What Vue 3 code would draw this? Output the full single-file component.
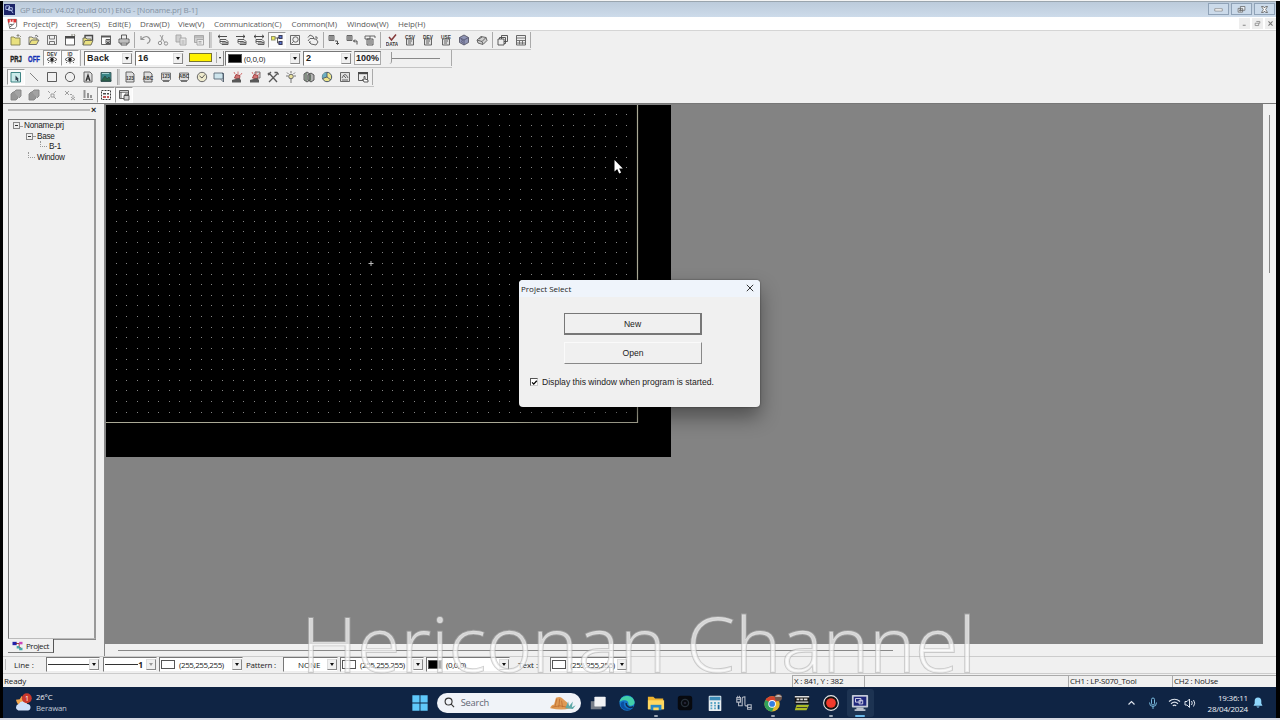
<template>
  <div class="desktop">
    <div class="app-window">
      <header class="title-bar">
        <svg class="app-icon" viewBox="0 0 12 12" v-html="icons.app"></svg>
        <span class="title-text">GP Editor V4.02 (build 001) ENG - [Noname.prj B-1]</span>
        <div class="window-buttons">
          <button v-for="b in ['min', 'restore', 'close']" :key="b" class="window-btn">
            <svg viewBox="0 0 12 12" v-html="icons['win_' + b]"></svg>
          </button>
        </div>
      </header>

      <nav class="menu-bar">
        <svg class="menu-icon" viewBox="0 0 12 12" v-html="icons.doc"></svg>
        <span v-for="m in menus" :key="m.label" class="menu-item" :style="{ width: m.width + 'px' }">{{ m.label }}</span>
        <div class="mdi-buttons">
          <span v-for="b in ['min', 'restore', 'close']" :key="b" class="mdi-btn">
            <svg viewBox="0 0 12 12" v-html="icons['mdi_' + b]"></svg>
          </span>
        </div>
      </nav>

      <div class="toolbars">
        <div class="toolbar">
          <template v-for="(group, i) in mainTools" :key="i">
            <i v-if="i" class="sep" :class="{ wide: i === 2, loose: i === 4 }"></i>
            <span v-for="t in group" :key="t" class="tool" :class="{ pressed: t === 'tree' }">
              <svg viewBox="0 0 12 12" v-html="icons[t]"></svg>
            </span>
          </template>
          <i class="sep end"></i>
        </div>

        <div class="toolbar">
          <span class="tool word">PRJ</span>
          <span class="tool word blue">OFF</span>
          <span class="tool pressed"><svg viewBox="0 0 12 12" v-html="icons.devEye"></svg></span>
          <span class="tool pressed"><svg viewBox="0 0 12 12" v-html="icons.idEye"></svg></span>
          <i class="sep gap"></i>
          <div class="combo bold back">Back<b class="arrow"></b></div>
          <div class="combo bold size">16<b class="arrow"></b></div>
          <div class="color-btn"><span class="swatch yellow"></span><b class="arrow"></b></div>
          <div class="combo color"><span class="swatch black"></span>(0,0,0)<b class="arrow"></b></div>
          <div class="combo bold width">2<b class="arrow"></b></div>
          <div class="zoom-box">100%</div>
          <div class="slider"><span class="thumb"></span><span class="track"></span></div>
          <i class="sep end"></i>
        </div>

        <div class="toolbar">
          <span v-for="t in drawTools" :key="t" class="tool" :class="{ pressed: t === 'select' }">
            <svg viewBox="0 0 12 12" v-html="icons[t]"></svg>
          </span>
          <i class="sep wide draw"></i>
          <span v-for="t in partTools" :key="t" class="tool part">
            <svg viewBox="0 0 12 12" v-html="icons[t]"></svg>
          </span>
          <i class="sep"></i>
        </div>

        <div class="toolbar last">
          <span v-for="t in editTools" :key="t" class="tool" :class="{ pressed: t === 'marquee' || t === 'props' }">
            <svg viewBox="0 0 12 12" v-html="icons[t]"></svg>
          </span>
        </div>
      </div>

      <main class="workspace">
        <aside class="side-panel">
          <div class="panel-grip"><span class="grip"></span><span class="panel-close">×</span></div>
          <div class="tree">
            <div class="node"><i class="toggle"></i><i class="dash short"></i>Noname.prj</div>
            <div class="node level1"><i class="toggle"></i><i class="dash short"></i>Base</div>
            <div class="node level2"><i class="dash"></i>B-1</div>
            <div class="node level1b"><i class="dash"></i>Window</div>
          </div>
          <div class="panel-tabs">
            <span class="tab"><svg viewBox="0 0 12 12" v-html="icons.projectTab"></svg>Project</span>
            <span class="tab-line"></span>
          </div>
        </aside>

        <section class="editor">
          <div class="editor-row">
            <div class="canvas-area">
              <svg class="screen" width="565" height="352" viewBox="0 0 565 352">
                <rect width="565" height="352" fill="#000" />
                <path :d="gridPath" stroke="#858585" stroke-width="1" shape-rendering="crispEdges" />
                <path d="M531.5 0V318M0 317.5H532" stroke="#aaa996" stroke-width="1.2" fill="none" />
                <path d="M262.5 158.5h5M265 156v5" stroke="#bbb" stroke-width="1" />
                <path d="M508.5 55v11.500l2.700-2.500 2 4.400 1.900-.9-2-4.100h3.700z" fill="#fff" />
              </svg>
            </div>
            <div class="v-scroll"><span></span></div>
          </div>
          <div class="h-scroll"><span></span></div>
        </section>
      </main>

      <div class="attr-bar">
        <span class="attr-label line-label">Line :</span>
        <div class="combo attr w53"><span class="stroke"></span><b class="arrow"></b></div>
        <div class="combo attr w53 gap3"><span class="stroke"></span><strong>1</strong><b class="arrow dim"></b></div>
        <div class="combo attr w84 gap2"><span class="swatch"></span><em>(255,255,255)</em><b class="arrow"></b></div>
        <span class="attr-label pattern-label">Pattern :</span>
        <div class="combo attr w55"><em class="none">NONE</em><b class="arrow"></b></div>
        <div class="combo attr w84 gap2"><span class="swatch"></span><em>(255,255,255)</em><b class="arrow"></b></div>
        <div class="combo attr w84 gap2"><span class="swatch black"></span><em>(0,0,0)</em><b class="arrow"></b></div>
        <span class="attr-label text-label">Text :</span>
        <div class="combo attr w78"><span class="swatch"></span><em>(255,255,255)</em><b class="arrow"></b></div>
      </div>

      <footer class="status-bar">
        <span class="status ready">Ready</span>
        <span class="status cell w72">X : 841, Y : 382</span>
        <span class="status cell w204"></span>
        <span class="status cell w104">CH1 : LP-S070_Tool</span>
        <span class="status cell w104">CH2 : NoUse</span>
      </footer>
    </div>

    <div class="taskbar">
      <div class="weather">
        <svg viewBox="0 0 18 20" v-html="icons.weather"></svg>
        <div><p>26°C</p><p class="muted">Berawan</p></div>
      </div>
      <span class="task"><svg viewBox="0 0 20 20" v-html="icons.start"></svg></span>
      <div class="search">
        <svg class="lens" viewBox="0 0 12 12"><circle cx="5" cy="5" r="3.800" /><path d="M7.800 7.800L11 11" /></svg>
        <span>Search</span>
        <svg class="search-art" viewBox="0 0 28 16" v-html="icons.searchArt"></svg>
      </div>
      <span v-for="t in tasks" :key="t.icon" class="task" :class="t.state">
        <svg viewBox="0 0 20 20" v-html="icons[t.icon]"></svg>
      </span>
      <div class="tray">
        <svg class="tray-icons" viewBox="0 0 72 20" v-html="icons.tray"></svg>
        <div class="clock"><p>19:36:11</p><p>28/04/2024</p></div>
        <svg class="bell" viewBox="0 0 10 12"><path d="M5 .5C2.700.5 1.700 2 1.700 4v2.500L.5 8.800h9L8.300 6.500V4C8.300 2 7.300.5 5 .5zM3.500 9.500h3C6.300 11 3.700 11 3.500 9.500z" /></svg>
      </div>
    </div>

    <div class="dialog">
      <div class="dialog-title">
        <span>Project Select</span>
        <svg viewBox="0 0 8 8"><path d="M.8.8l6.400 6.400M7.200.8L.8 7.200" /></svg>
      </div>
      <div class="dialog-body">
        <button class="dialog-btn default">New</button>
        <button class="dialog-btn">Open</button>
        <label class="check-row">
          <span class="checkbox"><svg viewBox="0 0 8 8"><path d="M1.300 3.800l1.800 2L6.600 2" /></svg></span>
          Display this window when program is started.
        </label>
      </div>
    </div>

    <svg class="watermark" viewBox="0 0 700 130">
      <text x="1" y="92" textLength="675" lengthAdjust="spacingAndGlyphs">Hericonan Channel</text>
    </svg>
  </div>
</template>

<script setup>
const menus = [
  { label: 'Project(P)', width: 43.5 },
  { label: 'Screen(S)', width: 41.5 },
  { label: 'Edit(E)', width: 32 },
  { label: 'Draw(D)', width: 38 },
  { label: 'View(V)', width: 36 },
  { label: 'Communication(C)', width: 77.5 },
  { label: 'Common(M)', width: 55.5 },
  { label: 'Window(W)', width: 51 },
  { label: 'Help(H)', width: 40 }
]

const mainTools = [
  ['newPrj', 'openPrj', 'save', 'newScreen', 'openScreen', 'saveScreen', 'print'],
  ['undo', 'cut', 'copy', 'paste'],
  ['sendLeft', 'sendRight', 'sendBoth', 'tree', 'preview', 'cycle'],
  ['devDown', 'devUp', 'devList'],
  ['data', 'csv', 'dev', 'use', 'cube', 'eraser'],
  ['cascade', 'table']
]
const drawTools = ['select', 'line', 'rect', 'circle', 'textA', 'image']
const partTools = ['num', 'asc', 'keypad', 'msg', 'time', 'comment', 'alarm', 'alarm2', 'tools', 'lamp', 'parts', 'pie', 'gauge', 'touch']
const editTools = ['front', 'backward', 'group', 'ungroup', 'align', 'marquee', 'props']

const tasks = [
  { icon: 'taskView' },
  { icon: 'edge' },
  { icon: 'explorer', state: 'running' },
  { icon: 'darkApp' },
  { icon: 'calc' },
  { icon: 'cable' },
  { icon: 'chrome', state: 'running' },
  { icon: 'plc' },
  { icon: 'record', state: 'running' },
  { icon: 'gp', state: 'active' }
]

// one short dash per grid point, snapped to whole pixels
const gridPath = (() => {
  let d = ''
  for (let r = -14; r <= 14; r++) {
    for (let c = -24; c <= 24; c++) {
      d += `M${Math.round(265 + c * 10.64)} ${Math.round(158 + r * 10.62) + 0.5}h1`
    }
  }
  return d
})()

const g = (d, color = '#333', fill = 'none', w = 0.9) =>
  `<path d="${d}" stroke="${color}" fill="${fill}" stroke-width="${w}"/>`
const label = (t, y = 4.5, color = '#222') =>
  `<text x="6" y="${y}" font-family="Liberation Sans" font-size="4.8" font-weight="bold" text-anchor="middle" fill="${color}">${t}</text>`
const monitor = g('M1.500 2h9v6.500l-1 1h-7l-1-1zM3 10.500h6', '#555', '#ddd')
const page = g('M2 1h6l2 2v8H2z', '#444', '#ddd')
const device = g('M3 5.500h6l2 2v3H5l-2-2zM3 7.500h5l3 1.500M5 9h5')
const siren = g('M3.500 7L5 3.500l4 1L8.500 8z', '#922', '#c66') + '<path d="M1 9l7-2 2 2v2.500H1z" fill="#444"/>' + g('M4 3L3 1M7 3V.5M9.500 4L11 2', '#c55')
const stack = g('M1 5l2-2h5v6l-2 2H1z', '#777', '#8a8a8a') + g('M4 3l2-2h5v6L9 9', '#777', '#999')

const icons = {
  app: '<path d="M0 0h12v12H0z" fill="#1c2468"/><path d="M2 2h4v4H2zM5 4h4v3H5zM7 6l3 4" fill="none" stroke="#b9c8ef"/>',
  doc: g('M1 1.500h9.500v8l-2 2H3z', '#666', '#fff') + '<path d="M1 1h2v4H1zM4 1h2v3H4zM7 1h3v4H7z" fill="#d33"/>' + g('M3 10l5-4M3 7h3', '#444'),
  win_min: g('M1 5h10v3H1z', '#777', '#fff'),
  win_restore: g('M4.500 2h6v5h-6zM1.500 4.500h6v5h-6z', '#555', '#edf2f8') + g('M3.500 6.500h2v1.500h-2z', '#555'),
  win_close: g('M2 2h2.500L6 4l1.500-2H10L7.500 6 10 10H7.500L6 8l-1.500 2H2L4.500 6z', '#555', '#fff', 1),
  mdi_min: g('M3 9h5', '#777', 'none', 1.5),
  mdi_restore: g('M4 2.500h6v3H8M2 5.500h6v4H2z', '#888', 'none', 1.4),
  mdi_close: g('M2.500 2.500l7 7M9.500 2.500l-7 7', '#777', 'none', 1.8),

  newPrj: g('M1 3h3l1 1h5v7H1z', '#73703a', '#e9df70') + g('M8 0v3M6.500 1.500h3M10 3l1-1', '#776'),
  openPrj: g('M1 10.500V3h3l1 1h4v2', '#555', '#f5eda0') + g('M1 10.500L3.500 6H11l-2.500 4.500z', '#555', '#eadf72') + g('M7 2q2-2 3 1', '#444'),
  save: g('M1.500 1.500h9v9h-9zM3.500 1.500v3.500h5V1.500M3.500 10.500v-3h5v3', '#555'),
  newScreen: g('M1.500 3h9v8h-9z', '#333', '#fff') + '<path d="M1 2h10v2.500H1z" fill="#333"/>' + g('M8 0v2M10 0l1 2', '#665'),
  openScreen: g('M3 4V1.500h7.500V6', '#333', '#ddd', 1.4) + g('M1 11V4h3l1 1h4v1.500M1 11l2-4.500h8L9 11z', '#554', '#eadf72'),
  saveScreen: g('M1.500 2.500h9v8h-9z', '#444', '#fff') + '<path d="M1 1.500h10v2H1z" fill="#444"/>' + g('M6 5.500h4v4H6zM8 5v4M6.500 7.500L8 9l1.500-1.500', '#333'),
  print: g('M3.500 5V1h5v4M1 5h10v4H1zM3 9v2h6V9', '#333', '#eee') + g('M2 7h8', '#777'),
  undo: g('M2 2v3.500h3.500M2 5.500q6-6 9 0 0 3-3 4', '#888', 'none', 1.2),
  cut: g('M3 1l5 8M6 1L4 7', '#888') + '<circle cx="3" cy="9" r="1.700" fill="none" stroke="#888"/><circle cx="9" cy="9.500" r="1.700" fill="none" stroke="#888"/>',
  copy: g('M1 1h5v7H1z', '#999', '#ccc') + g('M5 4h6v7H5zM6.500 7h3M6.500 9h3', '#999', '#e5e5e5'),
  paste: g('M1.500 1.500h9v7h-9zM1.500 3h9', '#999', '#ccc') + g('M4 5.500h6.500V11H4zM5.500 7.500h3M5.500 9h3', '#999', '#eee'),
  sendLeft: device + g('M1 2.500h9M3 .8L1 2.500 3 4.200', '#222'),
  sendRight: device + g('M1 2.500h9M8 .8l2 1.700-2 1.700', '#222'),
  sendBoth: device + g('M1 2.500h10M3 .8L1 2.500 3 4.200M9 .8l2 1.700-2 1.700', '#222'),
  tree: g('M4 4h2.500v5H8M6.500 3.500H8', '#333') + g('M.5 2.500h3.500v3.500H.5z', '#885', '#ee4', 1.1) + g('M8 1.500h3v3H8z', '#224', '#46c', 1.1) + g('M8 7.500h3v3H8z', '#224', '#46c', 1.1),
  preview: g('M1.500 1.500h9v9h-9z', '#444') + '<circle cx="6.500" cy="5.500" r="2.700" fill="#eee" stroke="#555"/>' + g('M2.500 9.500l2-2', '#444'),
  cycle: g('M1 3.500L3 1l3 1.500 1 2H3L1 7M2 8l2 2 5 1 2-3-2-3H7M8 3h2v2M3 7v2', '#444'),
  devDown: g('M1 1.500h5v5H1zM2 3h3M2 5h3', '#444', '#bbb') + g('M7 7h2.500v3M8 9l1.500 1.500L11 9', '#222'),
  devUp: g('M1 1.500h5v5H1zM2 3h3M2 5h3', '#444', '#bbb') + g('M11 10.500V7H7.500M9 5.500L7.500 7 9 8.500', '#222'),
  devList: g('M3 5h6v6H3zM4 7h4M4 9h4', '#333', '#ddd') + g('M1 2h5v3H1zM6 2h5v2', '#444'),
  data: g('M3 3l2.500 3L10 .5', '#722', 'none', 1.5) + label('DATA', 11.5),
  csv: g('M2.500 5h7v6h-7zM4 7h4M4 9h3', '#444', '#ddd') + label('CSV', 4.5),
  dev: g('M2.500 5h7v6h-7zM4 7h4M4 9h3', '#444', '#ddd') + label('DEV', 4.5),
  use: g('M2.500 5h7v6h-7zM4 7h4M4 9h3', '#444', '#ddd') + label('USE', 4.5),
  cube: g('M1.500 3.500L6 1l4.500 2.500v5L6 11 1.500 8.500z', '#445', '#8288ac') + g('M1.500 3.500L6 6l4.500-2.500M6 6v5M3 5.500l2 1M3 7.500l2 1', '#446'),
  eraser: g('M1 6l4-3.500 5 1 1 3L7 10.500 2 9z', '#444', '#ccc') + g('M1 6l5 1.500 4-4M6 7.500L7 10M3 5l3-2', '#444'),
  cascade: g('M4.500 1.500h6v6h-6zM2.500 3.500h6v6h-6z', '#333', '#eee') + g('M1 5h6v6H1z', '#333', '#eee'),
  table: g('M1.500 1.500h9v9.500h-9z', '#444', '#eee') + g('M2 4h8M2 6.500h8M2 9h8M4.500 6.500v4M7.500 6.500v4', '#555'),

  devEye: label('DEV', 4.2) + g('M1 7.500q5-5 10 0-5 4-10 0M3 10l-1 1M9 10l1 1M6 10v1.500') + '<circle cx="6" cy="7.500" r="1.700"/>',
  idEye: label('ID', 4.2) + g('M1 7.500q5-5 10 0-5 4-10 0M3 10l-1 1M9 10l1 1M6 10v1.500') + '<circle cx="6" cy="7.500" r="1.700"/>',

  select: g('M1 1.500h9.500v9.500H1z', '#166', '#c4e8e8') + '<path d="M5.500 4.500v5l1.200-.8.8 1.800 1-.5-.8-1.700H9z" fill="#123"/>',
  line: g('M2 2l8 8', '#666'),
  rect: g('M1.500 1.500h9v9h-9z', '#333'),
  circle: '<circle cx="6" cy="6" r="4.600" fill="none" stroke="#333" stroke-width=".9"/>',
  textA: page + g('M4 10l2-6 2 6M4.700 8h2.600', '#111', 'none', 1.2),
  image: g('M1 1.500h10v9H1z', '#244', '#277') + g('M1 10l4-5 2 3 2-2 2 4z', '#133', '#153') + '<path d="M2 2h7v1H2z" fill="#9cc"/>',
  num: page + label('123', 9),
  asc: page + label('ABC', 9),
  keypad: monitor + label('123', 7),
  msg: monitor + label('ABC', 7),
  time: '<circle cx="6" cy="6" r="4.700" fill="#eeeac8" stroke="#555"/>' + g('M3.500 5L6 7l3-3.500'),
  comment: g('M1 2h9v6H1z', '#456', '#c9e3ec') + g('M9 2.500h1.500V11L8 8.500', '#345'),
  alarm: siren,
  alarm2: g('M6 1h5v6H6z', '#555', '#ddd') + siren,
  tools: g('M2 2l8 9M10 3L2 11M1 4l3-3M7.500 1.500h2.500l1.500 2M1 2l1.500 2', '#444', 'none', 1.3),
  lamp: '<circle cx="6" cy="5.500" r="2.300" fill="#e9df91" stroke="#555"/>' + g('M6 0v2M1 5h2M9 5h2M2 1.500l1.500 1.500M10 1.500L8.500 3M5 9h2M5 11h2', '#555'),
  parts: g('M1 3l3-2 3 2v6l-3 2-3-2zM5 4l3-2 3 2v5l-3 2-3-2z', '#333', '#aaa') + g('M3 2v8M7 4v6', '#353'),
  pie: '<circle cx="6" cy="6" r="4.700" fill="#eee47c" stroke="#345"/><path d="M6 6V1.300A4.700 4.700 0 0 0 1.500 7.500z" fill="#5aa7bd"/>' + g('M6 1v5l4 3M6 6L1.500 7.500', '#345'),
  gauge: g('M1.500 1.500h9v9h-9z', '#444', '#ddd') + g('M3 7q3-7 6 0M4 4l3 3M3 9h6', '#444'),
  touch: g('M1.500 1.500h9v8h-9z', '#333', '#eee') + '<path d="M1 1h10v2.200H1z" fill="#333"/>' + g('M7 11L5.500 8.500 7 9V5.500h1V8l3 1v2z', '#333', '#fff'),

  front: stack,
  backward: stack,
  group: g('M2 2l2 2M10 2L8 4M2 10l2-2M10 10L8 8M5 5h3v3H5z', '#888'),
  ungroup: g('M1 2l4 4M5 2L1 6M6 5.500h2M9 6v2M7 8l4 3M11 8l-4 3', '#888'),
  align: g('M1 10.500h10', '#777') + g('M2.500 1v8M6 4v5M9 6v3', '#888', 'none', 2),
  marquee: '<path d="M1.500 1.500h9v9h-9z" fill="none" stroke="#222" stroke-dasharray="2 1"/>' + '<path d="M3 4h3v1.500H3zM7 4h2v1.500H7z" fill="#333"/><path d="M3 7h3v2H3zM7 7h2v2H7z" fill="#b44"/>',
  props: g('M1.500 1.500h9v8h-9z', '#333', '#fff') + g('M1 3.200h10M3 3v6', '#333') + g('M6 6.500h5V11H6zM7 6.500V5h3v1.500', '#333', '#ccc'),
  projectTab: '<path d="M0 1h5v4H0z" fill="#22a"/><path d="M4 3h4v5h2M8 3h3" stroke="#822" fill="none"/><path d="M8 1h4v3H8z" fill="#c4b"/><path d="M8 8h4v3H8zM5 6h3v3H5z" fill="#4aa"/>',

  weather: '<path d="M2 10l-1-3 4-.5L7 3l3 3 4 1-2 6H4z" fill="#f2a44b"/><path d="M3.500 18.500a3.500 3.500 0 0 1 .5-6.800 5 5 0 0 1 9-.2 3.600 3.600 0 0 1 1 7z" fill="#cfe0fa"/><circle cx="12.500" cy="5.500" r="5.200" fill="#c9382c"/><text x="12.500" y="8.200" font-family="Open Sans" font-size="7.500" text-anchor="middle" fill="#fff">1</text>',
  start: '<path d="M1.500 1.500h8v8h-8zM10.500 1.500h8v8h-8zM1.500 10.500h8v8h-8zM10.500 10.500h8v8h-8z" fill="#5fc8fa"/>',
  searchArt: '<path d="M1 14q0-3 4-4l2-7q4-2 6 0l6 5 3 6q-8 3-21 0z" fill="#df9a55"/><path d="M6 12l2-8M10 13l1-9M14 13l-1-7M3 13q8-3 16 0" stroke="#b9692d" stroke-width=".8" fill="none"/><path d="M17 14l3-7 1 5 4-5-1 6 4-2-3 4z" fill="#5fa9a8"/>',
  taskView: '<rect x="2" y="8" width="12" height="9" fill="#777e89"/><rect x="6" y="3" width="12.500" height="11" rx="1" fill="#f1f2f4"/>',
  edge: '<circle cx="10" cy="10" r="8.500" fill="#1575c9"/><path d="M1.700 9C3 0 17 0 18.500 9c0 5-7 5-7 2 1-4-6-6-9.800-2z" fill="#42cfa9"/><path d="M7 9c-2 5 3 9 8 7-4 4-12 1-12-4 0-3 2-4 4-3z" fill="#0b4fa0"/><path d="M9 10c0 5 5 6 8 4" stroke="#122b50" stroke-width="1.500" fill="none"/>',
  explorer: '<path d="M1 3h6l2 2h9v12H1z" fill="#edb22f"/><path d="M1 7h18v10H1z" fill="#ffd860"/><path d="M4 12h12v6H4z" fill="#2689c5"/><path d="M7 15h6v3H7z" fill="#ffd860"/>',
  darkApp: '<rect x="2" y="2" width="16" height="16" rx="3" fill="#07090e"/><circle cx="10" cy="10" r="4" fill="none" stroke="#26313b" stroke-width="1.500"/><circle cx="10" cy="10" r="1.500" fill="#223"/>',
  calc: '<rect x="3" y="2" width="14" height="17" rx="1" fill="#e8edf0"/><path d="M4 3h12v4H4z" fill="#3a8bb7"/><path d="M5 9h2v2H5zM9 9h2v2H9zM13 9h2v2h-2zM5 12h2v2H5zM9 12h2v2H9zM5 15h2v2H5zM9 15h2v2H9z" fill="#58a5c5"/><path d="M13 12h2v5h-2z" fill="#176295"/>',
  cable: '<path d="M2 4h4v5H2zM14 12h4v5h-4zM4 9v4h4V5q0-2 3-2v8q0 4 4 1" fill="none" stroke="#b5bac5" stroke-width="1.200"/><path d="M2 6h4M14 15h4M3 2v2M5 2v2" stroke="#b5bac5"/>',
  chrome: '<circle cx="9" cy="11" r="8.500" fill="#e4b92d"/><path d="M9 11L1.600 6.800A8.500 8.500 0 0 1 16.400 6.800z" fill="#d8442e"/><path d="M1.600 6.800A8.500 8.500 0 0 0 9 19.500L12 12z" fill="#31a05a"/><circle cx="9" cy="11" r="4.200" fill="#fff"/><circle cx="9" cy="11" r="3.200" fill="#337de2"/><circle cx="16" cy="4" r="4" fill="#70544a"/><path d="M12 3q4-4 8 0z" fill="#ccc"/>',
  plc: '<rect x="2" y="2" width="16" height="9" fill="#111"/><path d="M2 3h16M3 9h14" stroke="#ddd" stroke-width="1.500"/><path d="M4 6h3M8 6h3M12 6h4" stroke="#ddd" stroke-width="2"/><path d="M4 12h14l-3 6H2z" fill="#aebc26"/><path d="M4 15h12" stroke="#333"/>',
  record: '<circle cx="10" cy="10" r="8.200" fill="#111" stroke="#e7e8ea" stroke-width="1.200"/><circle cx="10" cy="10" r="5.400" fill="#f13a2c"/>',
  gp: '<rect x="1" y="1" width="18" height="14" rx="1" fill="#c6ccd8"/><rect x="3" y="3" width="14" height="10" fill="#20277d"/><path d="M5 5h6v4H5zM9 7h4v4H9z" stroke="#dde" fill="none"/><path d="M6 15h8v2h2v2H4v-2h2z" fill="#b9c0cc"/>',
  tray: '<path d="M2.500 11.500L5.500 8.500l3 3" stroke="#dde3ec" fill="none" stroke-width="1.200"/><rect x="25.500" y="5" width="3" height="7" rx="1.500" fill="none" stroke="#78b9dd"/><path d="M23.500 9.500q0 4 3.500 4t3.500-4M27 13.500V16" fill="none" stroke="#78b9dd"/><path d="M43 8.500q5.500-4.500 11 0M45 10.700q3.500-3 7 0M46.800 12.800q1.700-1.500 3.400 0" stroke="#dde3ec" fill="none" stroke-width="1.200"/><path d="M59 8.500h2l2.500-2.500v8.500L61 12h-2zM65.500 8q1.500 2 0 4M67.500 7q2.500 3 0 6.500" stroke="#dde3ec" fill="none"/>'
}
</script>

<style>
body {
  margin: 0;
  background: #000;
}
</style>

<style scoped>
.desktop {
  position: relative;
  width: 1280px;
  height: 720px;
  box-sizing: border-box;
  padding: 0 4px 0 3px;
  overflow: hidden;
  background: #000;
  border-top: 1px solid #f4f4f4;
  border-bottom: 2px solid #d6d9e2;
  font-family: 'Open Sans', 'Noto Sans', sans-serif;
  font-size: 8px;
  color: #222;
}

svg {
  display: block;
  flex: none;
}

p {
  margin: 0;
}

.app-window {
  height: 686px;
  display: flex;
  flex-direction: column;
  background: #f0f0f0;
}

.title-bar {
  height: 16px;
  display: flex;
  align-items: center;
  border-top: 1px solid #9aa5ae;
  background: linear-gradient(#bccbdb, #cddbea);
  box-sizing: border-box;
}

.app-icon {
  width: 11px;
  height: 11px;
  margin-left: 1px;
}

.title-text {
  margin: -1px 0 0 5px;
  color: #8593a3;
  font-size: 8px;
  letter-spacing: -0.21px;
  white-space: nowrap;
}

.window-buttons {
  margin: -1px 0 0 auto;
  padding-right: 1px;
  display: flex;
  gap: 2px;
}

.window-btn {
  width: 21px;
  height: 12px;
  padding: 0;
  display: flex;
  align-items: center;
  justify-content: center;
  background: #cbdaea;
  border: 1px solid #8fa2b7;
}

.window-btn svg {
  width: 9px;
  height: 9px;
}

.menu-bar {
  height: 14px;
  display: flex;
  align-items: center;
  background: #fff;
  border-bottom: 1px solid #d5d5d5;
  box-sizing: border-box;
  color: #595959;
  font-size: 8px;
  letter-spacing: -0.1px;
}

.menu-icon {
  width: 11px;
  height: 11px;
  margin: 0 5px 0 4px;
}

.menu-item {
  margin-top: -1px;
  white-space: nowrap;
}

.mdi-buttons {
  display: flex;
  gap: 2px;
  margin-left: auto;
}

.mdi-btn {
  width: 11px;
  height: 11px;
  background: #eee;
  display: flex;
  align-items: center;
  justify-content: center;
}

.mdi-btn svg {
  width: 7px;
  height: 7px;
}

.toolbars {
  height: 73px;
  border-bottom: 1px solid #777;
  box-sizing: border-box;
}

.toolbar {
  display: flex;
  align-items: center;
  width: max-content;
  height: 18.6px;
  box-sizing: border-box;
  padding-left: 4px;
  border-bottom: 1px solid #c4c4c4;
}

.toolbar.last {
  border: 0;
  height: 16px;
}

.tool {
  width: 18px;
  height: 16px;
  display: flex;
  align-items: center;
  justify-content: center;
  box-sizing: border-box;
  flex: none;
}

.tool svg {
  width: 12px;
  height: 12px;
  opacity: 0.88;
}

.part {
  width: 17.9px;
}

.pressed {
  background: #fafafa;
  border: 1px solid #999;
  border-right-color: #fff;
  border-bottom-color: #fff;
}

.word {
  font: bold 9.5px 'Liberation Sans', sans-serif;
  transform: scaleX(0.62);
  -webkit-text-stroke: 0.4px;
}

.blue {
  color: #1531b4;
}

.sep {
  width: 1px;
  height: 16px;
  margin: 0 1px;
  background: #aaa;
  flex: none;
}

.sep.wide {
  width: 2px;
  border-left: 1px solid #aaa;
  background: #ccc;
  margin: 0 1.5px 0 1px;
}

.sep.loose {
  margin: 0 2px 0 1px;
}

.sep.draw {
  margin: 0 1px 0 2px;
}

.sep.gap {
  margin: 0 3px 0 1px;
}

.sep.end {
  margin: 0;
}

.combo {
  height: 15px;
  box-sizing: border-box;
  display: flex;
  align-items: center;
  background: #fff;
  border: 1px solid #eee;
  border-top-color: #777;
  border-left-color: #777;
  padding-left: 2px;
  flex: none;
  margin-right: 2px;
  letter-spacing: -0.2px;
}

.bold {
  font: bold 9px 'Liberation Sans', sans-serif;
  letter-spacing: 0.2px;
}

.arrow {
  width: 10px;
  height: 11px;
  margin-left: auto;
  background: #f0f0f0;
  border: 1px solid #ddd;
  border-right-color: #888;
  border-bottom-color: #888;
  box-sizing: border-box;
  display: flex;
  align-items: center;
  justify-content: center;
  flex: none;
}

.arrow::before {
  content: '';
  border: 2.5px solid transparent;
  border-top: 3px solid #111;
  border-bottom: 0;
}

.arrow.dim::before {
  border-top-color: #999;
}

.back,
.size,
.width {
  width: 49px;
}

.color {
  width: 76px;
}

.color-btn {
  width: 38px;
  height: 15px;
  margin-right: 1px;
  display: flex;
  align-items: center;
  justify-content: space-between;
  box-sizing: border-box;
  border-right: 1px solid #888;
  border-bottom: 1px solid #888;
  padding-left: 3px;
}

.color-btn .arrow {
  width: 7px;
  border: 0;
  border-left: 1px solid #aaa;
}

.color-btn .arrow::before {
  border-width: 2px 1.5px 0;
}

.swatch {
  width: 14px;
  height: 9px;
  box-sizing: border-box;
  border: 1px solid #555;
  background: #fff;
  flex: none;
}

.swatch.black {
  background: #000;
  margin-right: 2px;
}

.swatch.yellow {
  width: 23px;
  background: #fff100;
  border-color: #777432;
}

.zoom-box {
  width: 27px;
  height: 14px;
  box-sizing: border-box;
  border: 1px solid #aaa;
  border-top-color: #666;
  background: #f8f8f8;
  font: bold 9px/12px 'Liberation Sans', sans-serif;
  text-align: center;
}

.slider {
  width: 70px;
  height: 14px;
  display: flex;
  align-items: center;
  padding-left: 8px;
  box-sizing: border-box;
}

.thumb {
  width: 2px;
  height: 12px;
  border-right: 1px solid #999;
  border-bottom-right-radius: 3px;
}

.track {
  width: 48px;
  height: 1px;
  background: #888;
}

.workspace {
  height: 552px;
  display: flex;
  flex: none;
}

.side-panel {
  width: 102px;
  display: flex;
  flex-direction: column;
  box-sizing: border-box;
  border-right: 1px solid #888;
  padding-left: 5px;
}

.panel-grip {
  display: flex;
  align-items: center;
  height: 11px;
}

.grip {
  width: 82px;
  height: 2px;
  border-top: 1px solid #bbb;
  border-bottom: 1px solid #bbb;
  box-sizing: border-box;
}

.panel-close {
  font: bold 9px/10px 'Liberation Sans', sans-serif;
  margin-left: 1px;
}

.tree {
  width: 88px;
  height: 520px;
  box-sizing: border-box;
  margin-top: 4px;
  padding-top: 0.5px;
  border: 1px solid #777;
  border-right: 2px solid #999;
  border-bottom-color: #bbb;
  font-family: 'Liberation Sans', sans-serif;
  font-size: 8.2px;
  letter-spacing: -0.25px;
}

.node {
  display: flex;
  align-items: center;
  height: 10.6px;
  padding-left: 4px;
  white-space: nowrap;
}

.level1 {
  padding-left: 17px;
}

.level2 {
  padding-left: 31px;
}

.level1b {
  padding-left: 19px;
}

.toggle {
  width: 7px;
  height: 7px;
  border: 1px solid #888;
  box-sizing: border-box;
  display: flex;
  align-items: center;
  justify-content: center;
}

.toggle::before {
  content: '';
  width: 3px;
  height: 1px;
  background: #333;
}

.dash {
  width: 6px;
  height: 5px;
  margin: -5px 2px 0 0;
  border-left: 1px dotted #999;
  border-bottom: 1px dotted #999;
}

.dash.short {
  width: 2px;
  height: 1px;
  margin: 0 2px 0 0;
  border-left: 0;
}

.panel-tabs {
  display: flex;
  height: 14px;
}

.tab {
  width: 46px;
  display: flex;
  align-items: center;
  gap: 3px;
  box-sizing: border-box;
  padding-left: 4px;
  border-right: 1px solid #555;
  border-bottom: 1px solid #777;
  font-size: 8px;
  letter-spacing: -0.45px;
}

.tab svg {
  width: 11px;
  height: 10px;
}

.tab-line {
  width: 42px;
  height: 1px;
  background: #888;
}

.editor {
  flex: 1;
  display: flex;
  flex-direction: column;
}

.editor-row {
  display: flex;
  height: 540px;
}

.canvas-area {
  width: 1158px;
  background: #838383;
  padding: 1px 0 0 1px;
  box-sizing: border-box;
}

.v-scroll {
  flex: 1;
  display: flex;
  justify-content: center;
  padding-top: 11px;
}

.v-scroll span {
  width: 1px;
  height: 158px;
  background: #888;
}

.h-scroll {
  height: 12px;
  display: flex;
  align-items: center;
  padding-left: 13px;
}

.h-scroll span {
  width: 775px;
  height: 1px;
  background: #888;
}

.attr-bar {
  height: 18px;
  display: flex;
  align-items: center;
  border-top: 1px solid #ccc;
  border-bottom: 1px solid #ccc;
  box-sizing: border-box;
  padding: 0 0 1px 2px;
  flex: none;
}

.attr-label {
  white-space: nowrap;
  box-sizing: border-box;
  font-size: 8px;
}

.line-label {
  width: 41px;
  padding-left: 8px;
  border-left: 1px solid #bbb;
}

.pattern-label {
  width: 40px;
  padding-left: 3px;
  letter-spacing: -0.2px;
}

.text-label {
  width: 40px;
  padding-left: 8px;
}

.attr {
  margin-right: 0;
  padding-left: 1px;
}

.attr em {
  font-style: normal;
  margin-left: 4px;
  letter-spacing: -0.4px;
}

.attr .none {
  margin-left: 13px;
  letter-spacing: -0.1px;
}

.attr .black {
  margin-right: 0;
}

.attr strong {
  font-size: 8.5px;
  margin-right: 3px;
}

.stroke {
  height: 1px;
  background: #333;
  flex: 1;
}

.w53 {
  width: 54px;
}

.w55 {
  width: 55px;
}

.w78 {
  width: 78px;
}

.w84 {
  width: 84px;
}

.gap3 {
  margin-left: 3px;
}

.gap2 {
  margin-left: 2px;
}

.status-bar {
  height: 13px;
  display: flex;
  align-items: center;
  box-sizing: border-box;
}

.status {
  height: 12px;
  line-height: 10px;
  box-sizing: border-box;
  font-size: 8px;
  letter-spacing: -0.25px;
  white-space: nowrap;
}

.ready {
  width: 789px;
  padding: 1px 0 0 1px;
  letter-spacing: -0.1px;
}

.cell {
  padding-left: 1px;
  border-left: 1px solid #aaa;
  border-top: 1px solid #aaa;
}

.w72 {
  width: 72px;
}

.w204 {
  width: 204px;
}

.w104 {
  width: 104px;
}

.taskbar {
  height: 31px;
  display: flex;
  align-items: center;
  background: #0f2444;
  color: #f0f2f6;
}

.weather {
  width: 402px;
  display: flex;
  align-items: center;
  gap: 4px;
  padding-left: 12px;
  box-sizing: border-box;
  line-height: 11px;
  font-size: 7.8px;
  letter-spacing: -0.2px;
}

.weather svg {
  width: 17px;
  height: 19px;
}

.weather .muted {
  color: #c0c8d4;
}

.task {
  width: 29.2px;
  height: 28px;
  display: flex;
  flex-direction: column;
  align-items: center;
  justify-content: center;
  position: relative;
}

.task svg {
  width: 18px;
  height: 18px;
}

.running::after,
.active::after {
  content: '';
  position: absolute;
  bottom: 0;
  width: 4px;
  height: 1.5px;
  border-radius: 1px;
  background: #9ba6b5;
}

.active {
  background: #1d3352;
  border-radius: 3px;
  width: 27px;
  margin-left: 1px;
}

.active::after {
  width: 10px;
  background: #69b7e8;
}

.search {
  width: 144px;
  height: 20px;
  margin: 0 2.5px;
  display: flex;
  align-items: center;
  box-sizing: border-box;
  padding: 0 5px 0 7px;
  border-radius: 10px;
  background: #f0f3f8;
  color: #5f6673;
  font-size: 9.3px;
  letter-spacing: -0.2px;
}

.lens {
  width: 11px;
  height: 11px;
  margin-right: 6px;
  fill: none;
  stroke: #333;
  stroke-width: 1.2;
}

.search-art {
  width: 27px;
  height: 15px;
  margin-left: auto;
}

.tray {
  margin-left: auto;
  display: flex;
  align-items: center;
  padding-right: 13px;
}

.tray-icons {
  width: 72px;
  height: 20px;
}

.clock {
  width: 50px;
  text-align: right;
  line-height: 11px;
  font-size: 8px;
  letter-spacing: -0.2px;
}

.bell {
  width: 10px;
  height: 12px;
  margin-left: 5px;
  fill: #8fd6fb;
}

.dialog {
  position: absolute;
  left: 519px;
  top: 279px;
  width: 241px;
  height: 127px;
  border-radius: 4px;
  overflow: hidden;
  background: #f0f0f0;
  box-shadow: 0 10px 20px rgba(0, 0, 0, 0.4), 0 0 2px rgba(0, 0, 0, 0.5);
}

.dialog-title {
  height: 17px;
  display: flex;
  align-items: center;
  justify-content: space-between;
  padding: 0 6px 1px 2px;
  box-sizing: border-box;
  background: #eff4fb;
  font-size: 8px;
}

.dialog-title svg {
  width: 8px;
  height: 8px;
  stroke: #333;
}

.dialog-body {
  display: flex;
  flex-direction: column;
  padding: 16px 0 0 45px;
  font-family: 'Liberation Sans', sans-serif;
}

.dialog-btn {
  width: 138px;
  height: 22px;
  margin-bottom: 7px;
  padding: 0;
  background: #f0f0f0;
  border: 1px solid #fafafa;
  border-right-color: #888;
  border-bottom-color: #888;
  font: 8.6px 'Liberation Sans', sans-serif;
  color: #222;
}

.dialog-btn.default {
  border: 1px solid #777;
  border-right-width: 2px;
  border-bottom-width: 2px;
}

.check-row {
  display: flex;
  align-items: center;
  margin: 6px 0 0 -34px;
  font-size: 8.6px;
  white-space: nowrap;
}

.checkbox {
  width: 8px;
  height: 8px;
  margin-right: 4px;
  box-sizing: border-box;
  background: #fff;
  border: 1px solid #ccc;
  border-top-color: #555;
  border-left-color: #555;
}

.checkbox svg {
  width: 7px;
  height: 7px;
  fill: none;
  stroke: #000;
  stroke-width: 1.5;
}

.watermark {
  position: absolute;
  left: 300px;
  top: 579px;
  width: 700px;
  height: 130px;
  pointer-events: none;
}

.watermark text {
  font-family: 'Open Sans', 'Noto Sans', sans-serif;
  font-size: 76px;
  font-weight: 360;
  fill: rgba(255, 255, 255, 0.66);
  stroke: rgba(175, 175, 175, 0.6);
  stroke-width: 1.8;
  paint-order: stroke;
}
</style>
